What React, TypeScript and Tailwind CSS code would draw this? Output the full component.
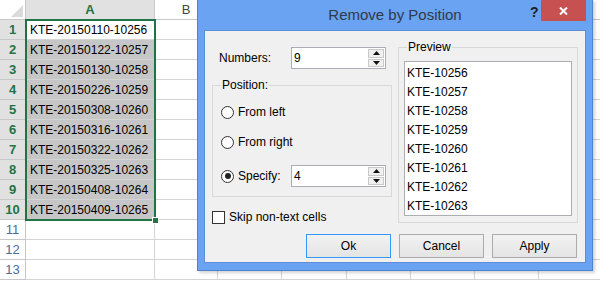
import React from "react";

const COLS = [129, 63, 64, 65, 64, 64, 64, 64];
// only A and B peek out from behind the dialog
const LETTERS = ["A", "B", "", "", "", "", "", ""];

const DATA = [
  "KTE-20150110-10256",
  "KTE-20150122-10257",
  "KTE-20150130-10258",
  "KTE-20150226-10259",
  "KTE-20150308-10260",
  "KTE-20150316-10261",
  "KTE-20150322-10262",
  "KTE-20150325-10263",
  "KTE-20150408-10264",
  "KTE-20150409-10265",
];

const PREVIEW = [
  "KTE-10256",
  "KTE-10257",
  "KTE-10258",
  "KTE-10259",
  "KTE-10260",
  "KTE-10261",
  "KTE-10262",
  "KTE-10263",
];

const font = { fontFamily: '"Liberation Sans", Arial, sans-serif' };

// ── Spreadsheet behind the dialog ─────────────────────────────────────────
function Sheet() {
  const rows = Array.from({ length: 13 }, (_, i) => i + 1);
  return (
    <div className="relative w-[600px] overflow-hidden bg-white" style={font}>
      {/* header row */}
      <div className="flex h-[20px]">
        <div className="relative w-[26px] shrink-0 border-r border-b border-[#c8c8c8] bg-white">
          <svg className="absolute right-[2px] bottom-[2px]" width="12" height="12" viewBox="0 0 12 12">
            <polygon points="12,0 12,12 0,12" fill="#dadada" />
          </svg>
        </div>
        {COLS.map((w, i) => (
          <div
            key={i}
            style={{ width: w }}
            className={`shrink-0 flex items-center justify-center border-r border-b border-[#c8c8c8] text-[13px] ${
              i === 0 ? "bg-[#e1e1e1] text-[#217346] font-bold" : "bg-white text-[#444]"
            }`}
          >
            {LETTERS[i]}
          </div>
        ))}
      </div>
      {rows.map(r => {
        const sel = r <= 10;
        return (
          <div key={r} className="flex h-[20px]">
            <div
              className={`w-[26px] shrink-0 flex items-center justify-center border-r border-b border-[#c8c8c8] text-[13px] ${
                sel ? "bg-[#e1e1e1] text-[#217346] font-bold" : "bg-white text-[#4a6c9b]"
              }`}
            >
              {r}
            </div>
            {COLS.map((w, i) => (
              <div
                key={i}
                style={{ width: w }}
                className={`shrink-0 flex items-center border-r border-b border-[#d4d4d4] pl-[4px] text-[12px] text-black ${
                  i === 0 && sel && r > 1 ? "bg-[#c6c6c6]" : "bg-white"
                }`}
              >
                {i === 0 && sel ? DATA[r - 1] : ""}
              </div>
            ))}
          </div>
        );
      })}
      {/* selection border + fill handle */}
      <div className="absolute left-[25px] top-[19px] w-[131px] h-[202px] border-2 border-[#217346]" />
      <div className="absolute left-[152px] top-[217px] w-[7px] h-[7px] bg-[#217346] border border-white" />
    </div>
  );
}

function Spinner() {
  return (
    <div className="ml-auto mr-[1px] flex flex-col w-[16px] h-full py-[1px] gap-[1px]">
      <div className="flex-1 flex items-center justify-center bg-[#f0f0f0] border border-[#c9c9c9]">
        <svg width="7" height="4" viewBox="0 0 7 4"><polygon points="3.5,0 7,4 0,4" fill="#111" /></svg>
      </div>
      <div className="flex-1 flex items-center justify-center bg-[#f0f0f0] border border-[#c9c9c9]">
        <svg width="7" height="4" viewBox="0 0 7 4"><polygon points="0,0 7,0 3.5,4" fill="#111" /></svg>
      </div>
    </div>
  );
}

function SpinInput({ value }: { value: string }) {
  return (
    <div className="flex items-center w-[95px] h-[22px] bg-white border border-[#abadb3]">
      <span className="pl-[2px] text-[12px] text-black">{value}</span>
      <Spinner />
    </div>
  );
}

function Radio({ label, checked }: { label: string; checked?: boolean }) {
  return (
    <div className="flex items-center h-[14px]">
      <div className="w-[13px] h-[13px] rounded-full border border-[#333] bg-white flex items-center justify-center">
        {checked && <div className="w-[6px] h-[6px] rounded-full bg-[#222]" />}
      </div>
      <span className="ml-[4px] text-[12px] text-black">{label}</span>
    </div>
  );
}

function Btn({ label, focused }: { label: string; focused?: boolean }) {
  return (
    <button
      className={`w-[85px] h-[24px] text-[12px] text-black bg-gradient-to-b from-[#f2f2f2] to-[#e4e4e4] border ${
        focused ? "border-[#3399ff]" : "border-[#acacac]"
      }`}
    >
      {label}
    </button>
  );
}

// ── Remove by Position dialog ─────────────────────────────────────────────
function Dialog() {
  return (
    <div
      className="absolute left-[197px] top-[-1px] w-[396px] h-[272px] bg-[#69a3f2] border border-[#4c84d3] shadow-[2px_2px_3px_rgba(0,0,0,0.18)] flex flex-col px-[6px] pb-[7px]"
      style={font}
    >
      {/* title bar */}
      <div className="relative h-[30px] shrink-0 flex items-center justify-center">
        <span className="text-[15px] text-[#2f3a4a] pt-[1px]">Remove by Position</span>
        <span className="absolute left-[326px] top-[2px] text-[14px] font-bold text-[#1e1e1e]">?</span>
        <div className="absolute right-0 top-0 w-[45px] h-[21px] bg-[#c75050] flex items-center justify-center">
          <svg width="9" height="8" viewBox="0 0 9 8">
            <path d="M1 0.5 L8 7.5 M8 0.5 L1 7.5" stroke="white" strokeWidth="2" />
          </svg>
        </div>
      </div>

      {/* body */}
      <div className="flex-1 bg-[#f0f0f0] border border-[#5b8fd8] px-[7px] pt-[16px] flex flex-col">
        <div className="flex gap-[6px]">
          {/* left column */}
          <div className="w-[180px] flex flex-col">
            <div className="flex items-center h-[22px]">
              <span className="w-[79px] pl-[7px] text-[12px] text-black">Numbers:</span>
              <SpinInput value="9" />
            </div>

            <div className="relative mt-[16px] h-[112px] border border-[#d9d9d9] flex flex-col pl-[8px]">
              <span className="absolute left-[8px] top-[-9px] px-[1px] bg-[#f0f0f0] text-[12px] text-black leading-[16px]">
                Position:
              </span>
              <div className="mt-[19px]">
                <Radio label="From left" />
              </div>
              <div className="mt-[16px]">
                <Radio label="From right" />
              </div>
              <div className="mt-[16px] flex items-center">
                <div className="w-[70px]">
                  <Radio label="Specify:" checked />
                </div>
                <SpinInput value="4" />
              </div>
            </div>

            <div className="mt-[11px] flex items-center">
              <div className="w-[13px] h-[13px] border border-[#333] bg-white" />
              <span className="ml-[4px] text-[12px] text-black">Skip non-text cells</span>
            </div>
          </div>

          {/* right column */}
          <div className="relative w-[180px] h-[176px] border border-[#d9d9d9] pl-[5px] pt-[13px]">
            <span className="absolute left-[8px] top-[-9px] px-[1px] bg-[#f0f0f0] text-[12px] text-black leading-[16px]">
              Preview
            </span>
            <div className="w-[168px] h-[155px] bg-white border border-[#abadb3] pl-[2px] pt-[2px] overflow-hidden">
              {PREVIEW.map(p => (
                <div key={p} className="h-[19px] leading-[19px] text-[12px] text-black">{p}</div>
              ))}
            </div>
          </div>
        </div>

        <div className="mt-[8px] mr-[1px] flex justify-end gap-[8px]">
          <Btn label="Ok" focused />
          <Btn label="Cancel" />
          <Btn label="Apply" />
        </div>
      </div>
    </div>
  );
}

export default function App() {
  return (
    <div className="relative w-[613px] h-[294px] bg-white overflow-hidden">
      <Sheet />
      <Dialog />
    </div>
  );
}
